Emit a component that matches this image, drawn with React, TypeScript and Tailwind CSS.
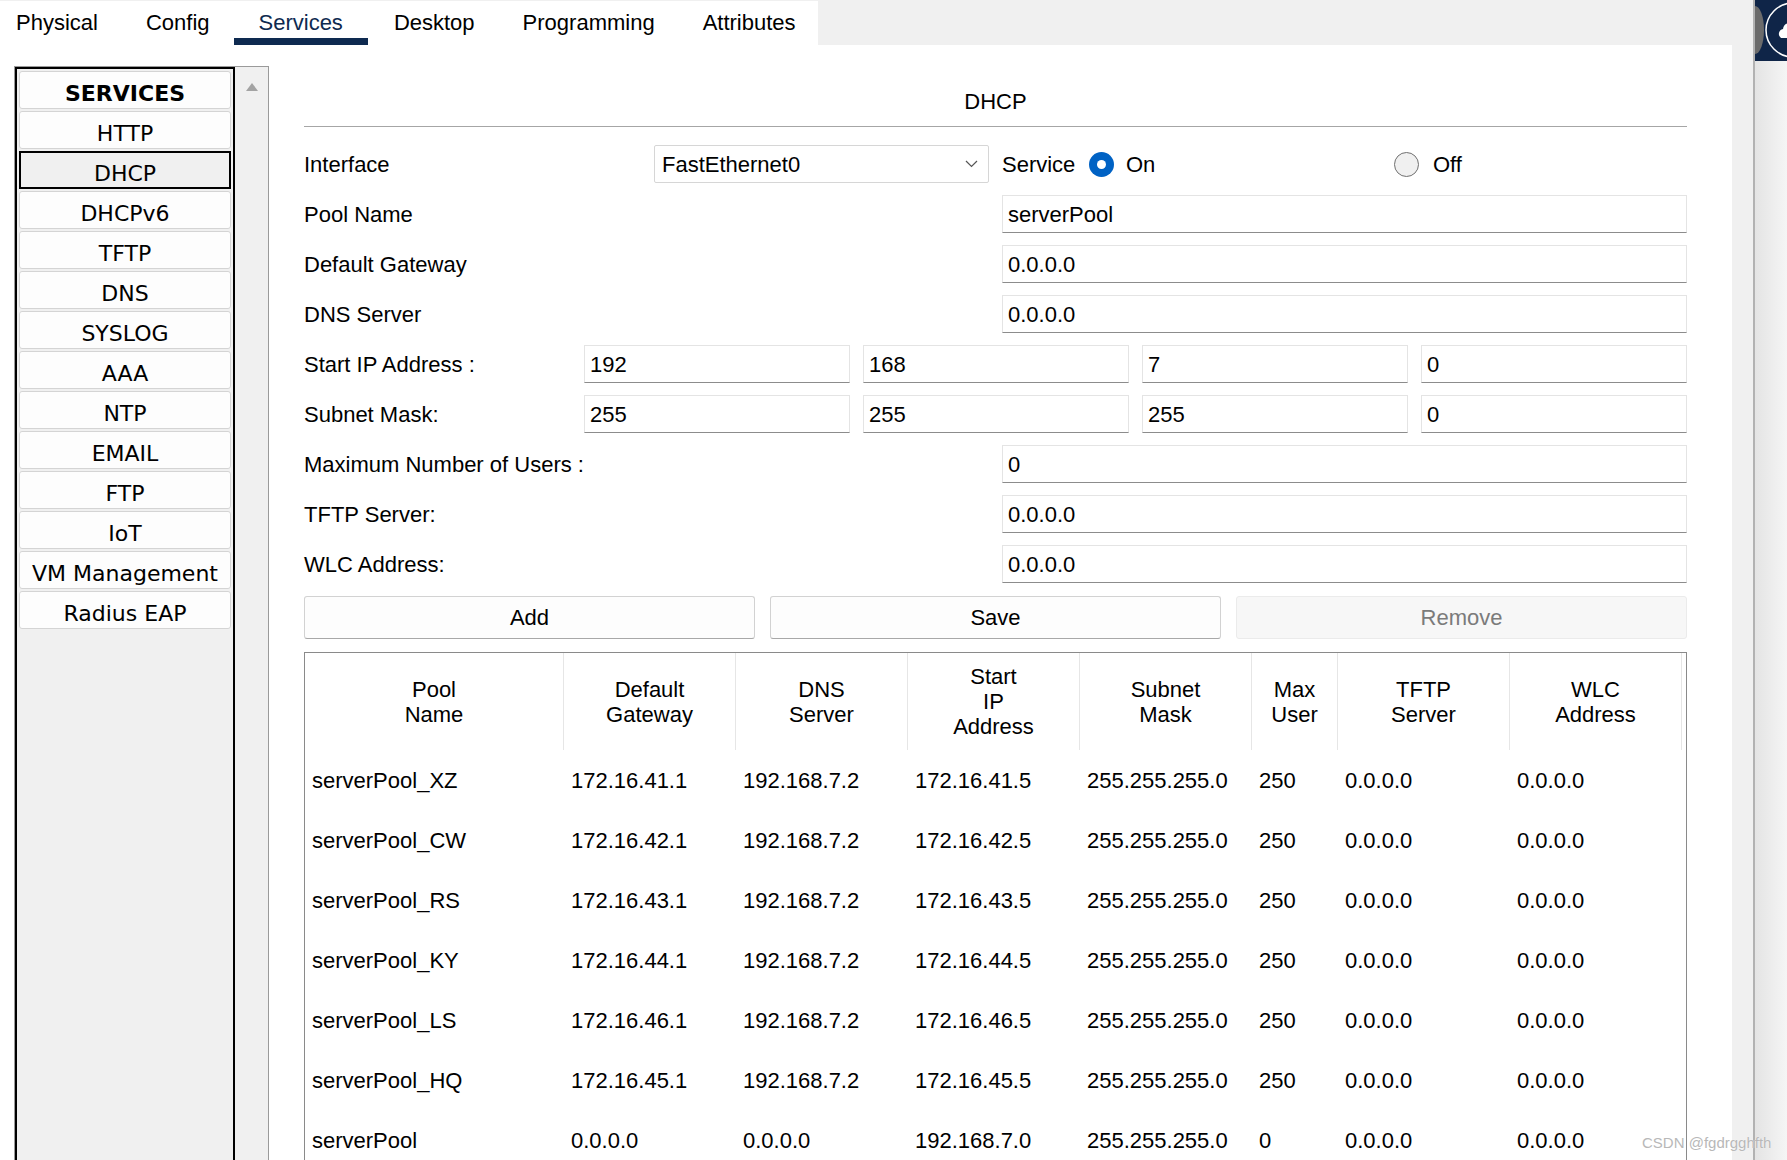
import React from 'react';

const tabs = [
  { name: 'Physical', pad: 'pr-[24px]' },
  { name: 'Config', pad: 'px-[24px]' },
  { name: 'Services', pad: 'px-[25px]' },
  { name: 'Desktop', pad: 'pl-[26px] pr-[24px]' },
  { name: 'Programming', pad: 'px-[24px]' },
  { name: 'Attributes', pad: 'px-[24px]' },
];

const services = [
  'HTTP', 'DHCP', 'DHCPv6', 'TFTP', 'DNS', 'SYSLOG', 'AAA', 'NTP', 'EMAIL', 'FTP', 'IoT', 'VM Management', 'Radius EAP'
];

const headers = [
  ['Pool', 'Name'],
  ['Default', 'Gateway'],
  ['DNS', 'Server'],
  ['Start', 'IP', 'Address'],
  ['Subnet', 'Mask'],
  ['Max', 'User'],
  ['TFTP', 'Server'],
  ['WLC', 'Address'],
];

const pools = [
  ['serverPool_XZ', '172.16.41.1', '192.168.7.2', '172.16.41.5', '255.255.255.0', '250', '0.0.0.0', '0.0.0.0'],
  ['serverPool_CW', '172.16.42.1', '192.168.7.2', '172.16.42.5', '255.255.255.0', '250', '0.0.0.0', '0.0.0.0'],
  ['serverPool_RS', '172.16.43.1', '192.168.7.2', '172.16.43.5', '255.255.255.0', '250', '0.0.0.0', '0.0.0.0'],
  ['serverPool_KY', '172.16.44.1', '192.168.7.2', '172.16.44.5', '255.255.255.0', '250', '0.0.0.0', '0.0.0.0'],
  ['serverPool_LS', '172.16.46.1', '192.168.7.2', '172.16.46.5', '255.255.255.0', '250', '0.0.0.0', '0.0.0.0'],
  ['serverPool_HQ', '172.16.45.1', '192.168.7.2', '172.16.45.5', '255.255.255.0', '250', '0.0.0.0', '0.0.0.0'],
  ['serverPool', '0.0.0.0', '0.0.0.0', '192.168.7.0', '255.255.255.0', '0', '0.0.0.0', '0.0.0.0'],
];

function Field({ value }: { value: string }) {
  return (
    <div className="h-[38px] flex items-center bg-white border border-[#e4e4e4] border-b-[#8c8c8c] pl-[5px] text-[22px] text-black">
      {value}
    </div>
  );
}

function Row({ children }: { children: React.ReactNode }) {
  return <div className="h-[50px] flex items-center">{children}</div>;
}

function WideRow({ label, value }: { label: string; value: string }) {
  return (
    <Row>
      <div className="flex-1">{label}</div>
      <div className="w-[685px]">
        <Field value={value} />
      </div>
    </Row>
  );
}

function IpRow({ label, parts }: { label: string; parts: string[] }) {
  return (
    <Row>
      <div className="w-[280px]">{label}</div>
      <div className="flex-1 grid grid-cols-4 gap-[13px]">
        {parts.map((p, i) => (
          <Field key={i} value={p} />
        ))}
      </div>
    </Row>
  );
}

export default function App() {
  return (
    <div className="relative w-[1787px] h-[1160px] overflow-hidden flex bg-[#f0f0f0] text-black" style={{ fontFamily: '"Liberation Sans", Arial, sans-serif' }}>
      <div className="w-[1732px] flex flex-col">
        {/* tabs */}
        <div className="h-[45px] pt-[1px] flex">
          <div className="w-[818px] bg-white flex pl-[16px]">
            {tabs.map(t => (
              <div key={t.name} className={`flex flex-col ${t.pad} ${t.name === 'Services' ? 'text-[#0e2a50]' : ''}`}>
                <div className="pt-[6px] h-[37px] leading-[31px] text-[22px]">{t.name}</div>
                <div className={`h-[7px] ${t.name === 'Services' ? 'bg-[#0e2a50] -mx-[25px]' : ''}`} />
              </div>
            ))}
          </div>
        </div>

        <div className="flex-1 bg-white flex">
          {/* sidebar */}
          <div className="ml-[14px] mt-[21px] w-[255px] border border-[#9a9a9a] border-b-0 flex">
            <div className="w-[220px] border-2 border-b-0 border-black bg-[#f0f0f0] p-[2px]" style={{ fontFamily: '"DejaVu Sans", Verdana, sans-serif' }}>
              <div className="h-[38px] mb-[2px] pt-[6px] flex items-center justify-center bg-[#fdfdfd] border border-[#d4d4d4] rounded-[3px] text-[22px] font-bold">
                SERVICES
              </div>
              {services.map(s => (
                <div
                  key={s}
                  className={`h-[38px] mb-[2px] pt-[6px] flex items-center justify-center text-[22px] ${
                    s === 'DHCP' ? 'bg-[#f0f0f0] border-2 border-black' : 'bg-[#fdfdfd] border border-[#d4d4d4] rounded-[3px]'
                  }`}
                >
                  {s}
                </div>
              ))}
            </div>
            <div className="flex-1 bg-[#f0f0f0] flex justify-center pt-[16px]">
              <svg width="12" height="8" viewBox="0 0 12 8">
                <polygon points="6,0 12,8 0,8" fill="#a3a3a3" />
              </svg>
            </div>
          </div>

          {/* main */}
          <div className="ml-[35px] w-[1383px] text-[22px]">
            <div className="mt-[42px] h-[30px] leading-[30px] text-center">DHCP</div>
            <div className="mt-[9px] h-[1px] bg-[#a6a6a6]" />

            <div className="mt-[12px]">
              <Row>
                <div className="w-[350px]">Interface</div>
                <div className="w-[335px] h-[38px] flex items-center justify-between bg-white border border-[#d6d6d6] rounded-[2px] pl-[7px] pr-[10px]">
                  <span>FastEthernet0</span>
                  <svg width="13" height="8" viewBox="0 0 13 8">
                    <polyline points="1,1 6.5,6.5 12,1" fill="none" stroke="#555" strokeWidth="1.2" />
                  </svg>
                </div>
                <div className="ml-[13px] w-[685px] flex items-center">
                  <span className="w-[87px]">Service</span>
                  <div className="flex-1 grid grid-cols-2">
                    <div className="flex items-center gap-[12px]">
                      <span className="w-[25px] h-[25px] rounded-full bg-[#0062c4] flex items-center justify-center">
                        <span className="w-[9px] h-[9px] rounded-full bg-white" />
                      </span>
                      <span>On</span>
                    </div>
                    <div className="flex items-center gap-[14px] pl-[6px]">
                      <span className="w-[25px] h-[25px] rounded-full bg-[#f0f0f0] border-[1.5px] border-[#707070]" />
                      <span>Off</span>
                    </div>
                  </div>
                </div>
              </Row>
              <WideRow label="Pool Name" value="serverPool" />
              <WideRow label="Default Gateway" value="0.0.0.0" />
              <WideRow label="DNS Server" value="0.0.0.0" />
              <IpRow label="Start IP Address :" parts={['192', '168', '7', '0']} />
              <IpRow label="Subnet Mask:" parts={['255', '255', '255', '0']} />
              <WideRow label="Maximum Number of Users :" value="0" />
              <WideRow label="TFTP Server:" value="0.0.0.0" />
              <WideRow label="WLC Address:" value="0.0.0.0" />
            </div>

            <div className="mt-[7px] grid grid-cols-3 gap-[15px]">
              <div className="h-[43px] flex items-center justify-center bg-[#fdfdfd] border border-[#d2d2d2] border-b-[#a8a8a8] rounded-[3px]">Add</div>
              <div className="h-[43px] flex items-center justify-center bg-[#fdfdfd] border border-[#d2d2d2] border-b-[#a8a8a8] rounded-[3px]">Save</div>
              <div className="h-[43px] flex items-center justify-center bg-[#f7f7f7] border border-[#ebebeb] rounded-[3px] text-[#7b7b7b]">Remove</div>
            </div>

            <div className="mt-[13px] border border-b-0 border-[#8a8a8a] h-[600px] bg-white">
              <div className="grid grid-cols-[259px_172px_172px_172px_172px_86px_172px_172px_1fr] h-[97px]">
                {headers.map((h, i) => (
                  <div key={i} className="border-r border-[#e6e6e6] flex flex-col items-center justify-center leading-[25px] text-center">
                    {h.map(line => (
                      <span key={line}>{line}</span>
                    ))}
                  </div>
                ))}
                <div />
              </div>
              {pools.map(r => (
                <div key={r[0]} className="grid grid-cols-[259px_172px_172px_172px_172px_86px_172px_172px_1fr] h-[60px] items-center">
                  {r.map((c, i) => (
                    <div key={i} className="pl-[7px] whitespace-nowrap">{c}</div>
                  ))}
                  <div />
                </div>
              ))}
            </div>
          </div>
        </div>
      </div>

      {/* right edge */}
      <div className="w-[21px] bg-[#f0f0f0]" />
      <div className="flex-1 border-l-2 border-[#b2b2b2] bg-gradient-to-r from-[#e4e4e4] to-[#f5f5f5] flex flex-col">
        <div className="h-[61px] bg-[#0f2548]">
          <svg width="32" height="61" viewBox="0 0 32 61">
            <ellipse cx="0" cy="30" rx="9" ry="24" fill="#6b6b6b" />
            <circle cx="38" cy="30" r="27" fill="none" stroke="#ffffff" strokeWidth="1.5" />
            <path d="M26 38 a5 5 0 0 1 2 -9 a7 7 0 0 1 6 -6 L34 38 Z" fill="#ffffff" />
          </svg>
        </div>
      </div>

      <div className="absolute left-[1642px] top-[1132px] text-[15px] text-[#b8b8b8]" style={{ textShadow: '0 0 1px #fff' }}>
        CSDN @fgdrgghfth
      </div>
    </div>
  );
}
